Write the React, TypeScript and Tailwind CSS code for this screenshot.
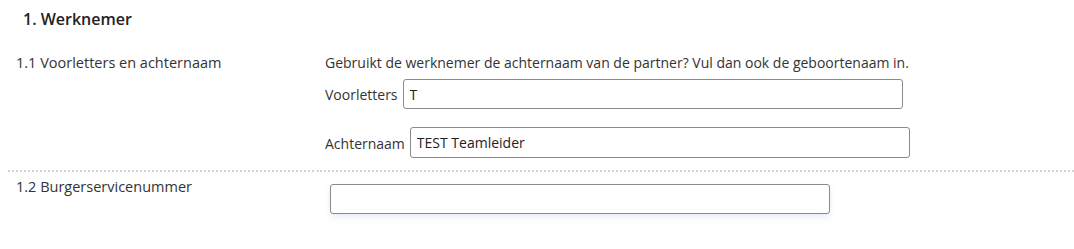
import React from 'react';

const inputBase = "h-[30px] w-[500px] rounded-[3px] border border-[#8a8a8a] bg-white px-[6px] text-[14px] text-[#222] outline-none font-['Open_Sans',sans-serif]";

export default function App() {
    return (
        <div className="w-[1074px] h-[249px] bg-white font-['Open_Sans',sans-serif] text-[14px] leading-[20px] text-[#333]">
            <h2 className="pl-[23px] pt-[9px] text-[16px] font-semibold leading-[20px] text-[#222]">1. Werknemer</h2>

            {/* 1.1 */}
            <div className="mt-[16px] ml-[8px] flex">
                <div className="w-[306px] shrink-0 border-b-2 border-dotted border-[#d4d4d4] pl-[8px] pt-[8px] text-[14.5px]">
                    1.1 Voorletters en achternaam
                </div>
                <div className="ml-[3px] flex-1 border-b-2 border-dotted border-[#d4d4d4] pl-[8px] pt-[8px] pb-[12px]">
                    <p>Gebruikt de werknemer de achternaam van de partner? Vul dan ook de geboortenaam in.</p>
                    <div className="mt-[6px] flex items-center gap-[5px]">
                        <span className="pt-[2px]">Voorletters</span>
                        <input className={inputBase} defaultValue="T" />
                    </div>
                    <div className="mt-[18px] flex items-center gap-[5px]">
                        <span className="pt-[2px]">Achternaam</span>
                        <input className={inputBase + " h-[31px]"} defaultValue="TEST Teamleider" />
                    </div>
                </div>
            </div>

            {/* 1.2 */}
            <div className="ml-[8px] flex">
                <div className="w-[306px] shrink-0 pl-[8px] pt-[5px] text-[14.5px]">1.2 Burgerservicenummer</div>
                <div className="ml-[3px] flex-1 pl-[13px] pt-[12px]">
                    <input className={inputBase + " shadow-[0_3px_6px_rgba(120,160,220,0.18)]"} defaultValue="" />
                </div>
            </div>
        </div>
    );
}
